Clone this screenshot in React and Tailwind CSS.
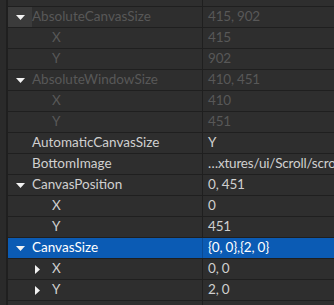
import React from "react";

const rows = [
  { name: "", value: "", depth: 0, partial: true },
  { name: "AbsoluteCanvasSize", value: "415, 902", depth: 0, arrow: "down", dim: true, hover: true },
  { name: "X", value: "415", depth: 1, dim: true },
  { name: "Y", value: "902", depth: 1, dim: true },
  { name: "AbsoluteWindowSize", value: "410, 451", depth: 0, arrow: "down", dim: true },
  { name: "X", value: "410", depth: 1, dim: true },
  { name: "Y", value: "451", depth: 1, dim: true },
  { name: "AutomaticCanvasSize", value: "Y", depth: 0 },
  { name: "BottomImage", value: "…xtures/ui/Scroll/scroll-bottom.png", depth: 0 },
  { name: "CanvasPosition", value: "0, 451", depth: 0, arrow: "down" },
  { name: "X", value: "0", depth: 1 },
  { name: "Y", value: "451", depth: 1 },
  { name: "CanvasSize", value: "{0, 0},{2, 0}", depth: 0, arrow: "down", selected: true },
  { name: "X", value: "0, 0", depth: 1, arrow: "right" },
  { name: "Y", value: "2, 0", depth: 1, arrow: "right" },
  { name: "", value: "", depth: 0 },
];

function Arrow({ dir }) {
  if (dir === "down")
    return (
      <svg width="9" height="5" viewBox="0 0 9 5">
        <path d="M0 0h9L4.5 5z" fill="#f2f2f2" />
      </svg>
    );
  return (
    <svg width="5" height="9" viewBox="0 0 5 9">
      <path d="M0 0v9l5-4.5z" fill="#f2f2f2" />
    </svg>
  );
}

function Row({ row }) {
  const text = row.selected
    ? "text-white"
    : row.dim
    ? "text-[#585858]"
    : "text-[#d0d0d0]";
  return (
    <div
      className={`flex shrink-0 border-b border-[#1f1f1f] ${
        row.partial ? "h-[7px]" : "h-[21px]"
      } ${row.selected ? "bg-[#0b5bb4]" : ""}`}
    >
      <div className="flex w-[194px] shrink-0 items-center">
        {row.depth === 0 ? (
          <>
            <div
              className={`flex h-full w-[24px] items-center justify-center ${
                row.hover ? "bg-[#3b3b3b]" : ""
              }`}
            >
              {row.arrow && <Arrow dir={row.arrow} />}
            </div>
            <span className={text}>{row.name}</span>
          </>
        ) : (
          <>
            <div className="flex h-full w-[44px] items-center justify-end pr-[12px]">
              {row.arrow && <Arrow dir={row.arrow} />}
            </div>
            <span className={text}>{row.name}</span>
          </>
        )}
      </div>
      <div
        className={`flex min-w-0 flex-1 items-center overflow-hidden whitespace-nowrap border-l pl-[5px] tracking-[-0.2px] ${
          row.selected ? "border-[#0a4a93]" : "border-[#1f1f1f]"
        } ${text}`}
      >
        {row.value}
      </div>
    </div>
  );
}

export default function App() {
  return (
    <div
      className="flex h-[305px] w-[334px] overflow-hidden bg-[#2e2e2e] text-[13.5px] leading-none"
      style={{ fontFamily: "Lato, 'Noto Sans', sans-serif" }}
    >
      <div className="h-full w-[8px] shrink-0 border-r-2 border-[#1f1f1f] bg-[#2a2a2a]" />
      <div className="flex min-w-0 flex-1 flex-col">
        {rows.map((row, i) => (
          <Row key={i} row={row} />
        ))}
      </div>
    </div>
  );
}
